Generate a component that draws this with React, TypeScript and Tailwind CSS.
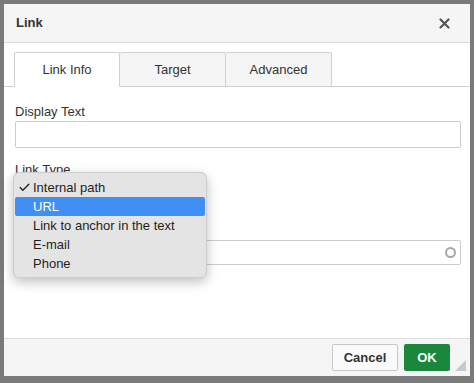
import { Check } from 'lucide-react'

const tabs = ['Link Info', 'Target', 'Advanced']
const linkTypes = ['Internal path', 'URL', 'Link to anchor in the text', 'E-mail', 'Phone']

const App = () => {
  return (
    <div
      className="w-[474px] h-[383px] bg-[#7a7a7a] pt-[4px] pl-[4px] pr-[4px] pb-[7px] text-[#333]"
      style={{ fontFamily: '"Liberation Sans", Arial, sans-serif' }}
    >
      <div className="relative flex flex-col h-full bg-white">
        {/* Header */}
        <div className="flex items-center justify-between h-[39px] px-3 bg-[#f5f5f5] border-b border-[#dcdcdc]">
          <span className="text-[13px] font-bold">Link</span>
          <svg width="11" height="11" viewBox="0 0 11 11" className="mr-[8px] mt-[1px]">
            <path d="M1.5 1.5 L9.5 9.5 M9.5 1.5 L1.5 9.5" stroke="#555" strokeWidth="2.2" strokeLinecap="round" />
          </svg>
        </div>

        {/* Body */}
        <div className="relative flex-1 pt-[9px]">
          <div className="flex pl-[10px] border-b border-[#cfcfcf]">
            {tabs.map((tab, i) => (
              <div
                key={tab}
                className={`w-[106px] h-[35px] -mb-px flex items-center justify-center text-[13px] border border-[#d0d0d0] ${
                  i === 0 ? 'bg-white border-b-white' : 'bg-[#f5f5f5] border-l-0'
                } rounded-t-[2px]`}
              >
                {tab}
              </div>
            ))}
          </div>

          <div className="pl-[11px] pr-[9px] pt-[17px]">
            <label className="block text-[13px] leading-[16px] mb-[1px]">Display Text</label>
            <div className="h-[27px] border border-[#cccccc] rounded-[2px]" />

            <label className="block text-[13px] leading-[16px] mt-[14px]">Link Type</label>
            <div className="w-[180px] h-[26px] mt-[2px] border border-[#cccccc] rounded-[2px]" />

            {/* URL label sits under the open menu */}
            <div className="h-[16px] mt-[14px]" />
            <div className="relative h-[25px] mt-[4px] border border-[#cccccc] rounded-[2px]">
              <span className="absolute right-[4px] top-[6px] w-[11px] h-[11px] rounded-full border-2 border-[#a8a8a8]" />
            </div>
          </div>

          {/* Open select menu */}
          <div className="absolute left-[9px] top-[129px] w-[194px] pt-[5px] pb-[4px] px-[1px] bg-[#e4e4e4] rounded-[6px] border border-[#cdcdcd] shadow-[0_4px_12px_rgba(0,0,0,0.25)]">
            {linkTypes.map((t, i) => (
              <div
                key={t}
                className={`relative h-[19px] flex items-center pl-[18px] text-[13px] rounded-[2px] ${
                  i === 1 ? 'bg-[#3f8ff4] text-white' : 'text-[#1e1e1e]'
                }`}
              >
                {i === 0 && (
                  <Check className="absolute left-[3px] top-[3px]" size={13} strokeWidth={2.4} color="#1e1e1e" />
                )}
                {t}
              </div>
            ))}
          </div>
        </div>

        {/* Footer */}
        <div className="flex items-center justify-end gap-[6px] h-[38px] pr-[20px] bg-[#f5f5f5] border-t border-[#dcdcdc]">
          <button className="h-[27px] w-[66px] text-[13px] font-bold bg-[#fafafa] border border-[#c8c8c8] rounded-[2px]">
            Cancel
          </button>
          <button className="h-[27px] w-[46px] text-[13px] font-bold text-white bg-[#1b873c] rounded-[2px]">
            OK
          </button>
        </div>

        <svg width="11" height="11" viewBox="0 0 11 11" className="absolute right-[4px] bottom-[5px]">
          <path d="M11 0 L11 11 L0 11 Z" fill="#c9c9c9" />
        </svg>
      </div>
    </div>
  )
}

export default App
